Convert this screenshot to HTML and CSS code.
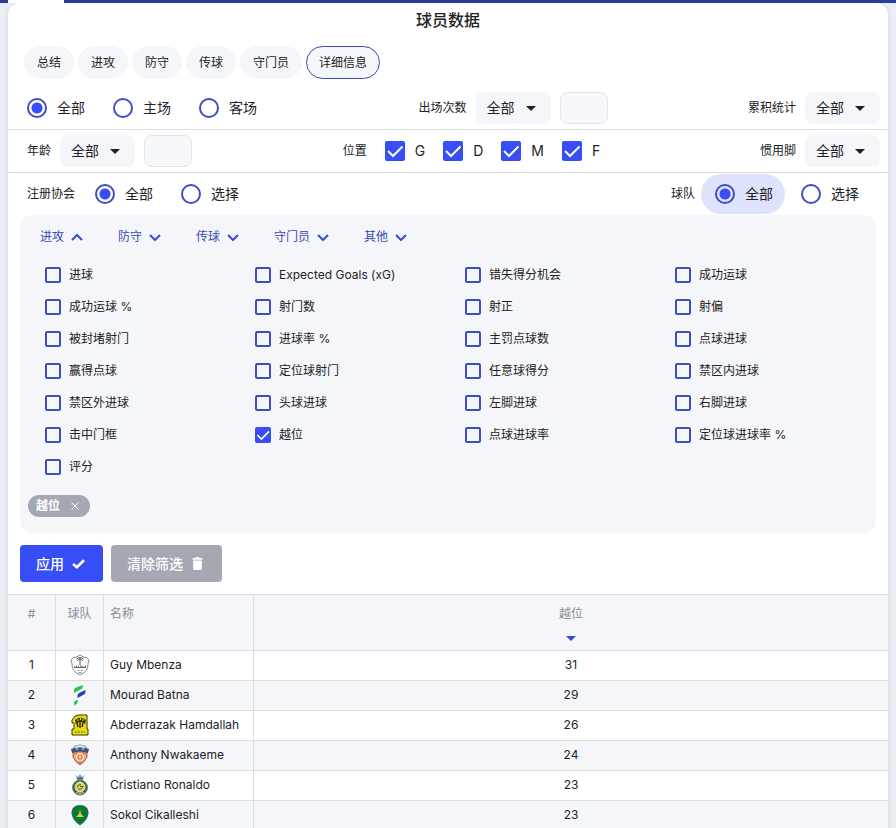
FILE: index.html
```html
<!DOCTYPE html>
<html lang="zh-CN">
  <head>
    <meta charset="UTF-8" />
    <meta name="viewport" content="width=device-width, initial-scale=1.0" />
    <title>球员数据</title>
    <link rel="stylesheet" href="styles.css">
  </head>
  <body>
    <div class="top-bar"><span class="top-bar-tab"></span></div>

    <main class="card">
      <h1>球员数据</h1>

      <!-- Category tabs -->
      <nav class="tabs">
        <button type="button">总结</button>
        <button type="button">进攻</button>
        <button type="button">防守</button>
        <button type="button">传球</button>
        <button type="button">守门员</button>
        <button type="button" class="active">详细信息</button>
      </nav>

      <form>
        <!-- Venue, appearances, accumulation -->
        <div class="filter-row">
          <div class="radio-group">
            <label class="radio"><input type="radio" name="venue" checked />全部</label>
            <label class="radio"><input type="radio" name="venue" />主场</label>
            <label class="radio"><input type="radio" name="venue" />客场</label>
          </div>
          <div class="filter-group">
            <label for="appearances">出场次数</label>
            <select id="appearances"><option>全部</option></select>
            <input type="text" class="number-box" aria-label="出场次数" />
          </div>
          <div class="filter-group">
            <label for="accumulation">累积统计</label>
            <select id="accumulation"><option>全部</option></select>
          </div>
        </div>

        <!-- Age, position, foot -->
        <div class="filter-row">
          <div class="filter-group first">
            <label for="age">年龄</label>
            <select id="age"><option>全部</option></select>
            <input type="text" class="number-box" aria-label="年龄" />
          </div>
          <div class="filter-group">
            <span>位置</span>
            <div class="position-group">
              <label class="position"><input type="checkbox" checked />G</label>
              <label class="position"><input type="checkbox" checked />D</label>
              <label class="position"><input type="checkbox" checked />M</label>
              <label class="position"><input type="checkbox" checked />F</label>
            </div>
          </div>
          <div class="filter-group">
            <label for="foot">惯用脚</label>
            <select id="foot"><option>全部</option></select>
          </div>
        </div>

        <!-- Nationality, team -->
        <div class="filter-row last">
          <div class="filter-group first radios">
            <span>注册协会</span>
            <div class="radio-group">
              <label class="radio"><input type="radio" name="nation" checked />全部</label>
              <label class="radio"><input type="radio" name="nation" />选择</label>
            </div>
          </div>
          <div class="filter-group radios">
            <span>球队</span>
            <div class="radio-group">
              <label class="radio highlight"><input type="radio" name="team" checked />全部</label>
              <label class="radio"><input type="radio" name="team" />选择</label>
            </div>
          </div>
        </div>

        <!-- Statistic picker -->
        <section class="panel">
          <div class="panel-tabs">
            <button type="button">进攻<svg class="chevron up" viewBox="0 0 12 8"><path d="M1 1l5 5 5-5" /></svg></button>
            <button type="button">防守<svg class="chevron" viewBox="0 0 12 8"><path d="M1 2l5 5 5-5" /></svg></button>
            <button type="button">传球<svg class="chevron" viewBox="0 0 12 8"><path d="M1 2l5 5 5-5" /></svg></button>
            <button type="button">守门员<svg class="chevron" viewBox="0 0 12 8"><path d="M1 2l5 5 5-5" /></svg></button>
            <button type="button">其他<svg class="chevron" viewBox="0 0 12 8"><path d="M1 2l5 5 5-5" /></svg></button>
          </div>
          <div class="stat-grid">
            <label><input type="checkbox" />进球</label>
            <label><input type="checkbox" />Expected Goals (xG)</label>
            <label><input type="checkbox" />错失得分机会</label>
            <label><input type="checkbox" />成功运球</label>
            <label><input type="checkbox" />成功运球 %</label>
            <label><input type="checkbox" />射门数</label>
            <label><input type="checkbox" />射正</label>
            <label><input type="checkbox" />射偏</label>
            <label><input type="checkbox" />被封堵射门</label>
            <label><input type="checkbox" />进球率 %</label>
            <label><input type="checkbox" />主罚点球数</label>
            <label><input type="checkbox" />点球进球</label>
            <label><input type="checkbox" />赢得点球</label>
            <label><input type="checkbox" />定位球射门</label>
            <label><input type="checkbox" />任意球得分</label>
            <label><input type="checkbox" />禁区内进球</label>
            <label><input type="checkbox" />禁区外进球</label>
            <label><input type="checkbox" />头球进球</label>
            <label><input type="checkbox" />左脚进球</label>
            <label><input type="checkbox" />右脚进球</label>
            <label><input type="checkbox" />击中门框</label>
            <label><input type="checkbox" checked />越位</label>
            <label><input type="checkbox" />点球进球率</label>
            <label><input type="checkbox" />定位球进球率 %</label>
            <label><input type="checkbox" />评分</label>
          </div>
          <button type="button" class="tag">越位<svg viewBox="0 0 8 8"><path d="M0.5 0.5l7 7M7.5 0.5l-7 7" /></svg></button>
        </section>

        <div class="actions">
          <button type="submit" class="apply">应用<svg viewBox="0 0 12 12"><path d="M1 6.5l3.5 3L11 3" fill="none" stroke="#fff" stroke-width="2.4" /></svg></button>
          <button type="reset" class="clear">清除筛选<svg viewBox="0 0 12 12"><path d="M1.5 1H4l.7-1h2.6L8 1h2.5v1.6h-9zM2 3.2h8v7.3A1.5 1.5 0 0 1 8.5 12h-5A1.5 1.5 0 0 1 2 10.5z" fill="#fff" /></svg></button>
        </div>
      </form>

      <!-- Results -->
      <table>
        <thead>
          <tr>
            <th class="rank">#</th>
            <th class="team">球队</th>
            <th class="name">名称</th>
            <th>越位<svg class="sort" viewBox="0 0 10 5"><path d="M0 0h10L5 5z" /></svg></th>
          </tr>
        </thead>
        <tbody>
          <tr>
            <td>1</td>
            <td>
              <svg class="crest" viewBox="0 0 20 22">
                <path d="M10 1l3 2 4 .5 2 3-1 3q.5 8-8 11.500Q1.500 17.500 2 9.500l-1-3 2-3L7 3z" fill="#fff" stroke="#777" stroke-width="0.9" />
                <path d="M10 4v7M6.500 5.500Q8 2.500 10 4q2-1.500 3.500 1.500M7.500 7L10 4l2.500 3" fill="none" stroke="#555" />
                <path d="M4.500 13.500v-1.500M6.500 13.500v-2M8.500 13.500v-1.500M11 13.500V11M13 13.500v-1.500M15.500 13.500v-2M4 13.500h12" fill="none" stroke="#555" stroke-width="0.9" />
                <path d="M7.500 16.500h2M11 16.500h2M8.500 18.500h3" stroke="#888" />
              </svg>
            </td>
            <td class="name">Guy Mbenza</td>
            <td>31</td>
          </tr>
          <tr>
            <td>2</td>
            <td>
              <svg class="crest" viewBox="0 0 20 22">
                <path d="M4 5.500Q4.500 4 6 3.500L13 1q.5 2.500-1.500 4L4 9z" fill="#2fc845" />
                <path d="M7.500 11q.5-1.500 2-2.200L15.500 6q.5 3-1.500 4.500l-6.500 3.500z" fill="#2142b5" />
                <path d="M4 18.500q.5-2 4-2.500 0 4-4 5.500z" fill="#2fc845" />
              </svg>
            </td>
            <td class="name">Mourad Batna</td>
            <td>29</td>
          </tr>
          <tr>
            <td>3</td>
            <td>
              <svg class="crest" viewBox="0 0 20 22">
                <path d="M2 6l3-4 4-1h8v14h1v6H2v-6h2V9H2z" fill="#e9dc13" stroke="#3a3800" />
                <path d="M5 6q5-5 11 0l-1 4q-5-4-9 0z" fill="#39370a" />
                <path d="M7 9l1 4M10 8v6M13 9l-1 4" stroke="#39370a" stroke-width="1.5" />
                <path d="M8 5v2M10.500 4v2M13 5v2" stroke="#e9dc13" />
                <path d="M5 18h10" stroke="#6b6710" stroke-dasharray="2 1" />
              </svg>
            </td>
            <td class="name">Abderrazak Hamdallah</td>
            <td>26</td>
          </tr>
          <tr>
            <td>4</td>
            <td>
              <svg class="crest" viewBox="0 0 20 22">
                <path d="M5 2q5-2 10 0l2 3v8q-2 5-7 8-5-3-7-8V5z" fill="#e8803c" stroke="#8a7480" />
                <path d="M5 2q5-2 10 0l1 3H4z" fill="#d7dce5" />
                <path d="M1 5q9-3 18 0l-1 4q-8-3-16 0z" fill="#35547c" />
                <path d="M6 6l1-2 1 2M12 6l1-2 1 2" fill="none" stroke="#a8b9cc" />
                <circle cx="10" cy="13" r="3.5" fill="#e8803c" stroke="#fbe8d8" stroke-width="1.3" />
                <path d="M9 12h2v2H9z" fill="#fbe8d8" />
                <path d="M5 10v4l3 4M15 10v4l-3 4" fill="none" stroke="#f7d3b6" stroke-width="0.8" />
              </svg>
            </td>
            <td class="name">Anthony Nwakaeme</td>
            <td>24</td>
          </tr>
          <tr>
            <td>5</td>
            <td>
              <svg class="crest" viewBox="0 0 20 22">
                <path d="M6 1l2 2 2-3 2 3 2-2-1 5H7z" fill="#8297b3" />
                <path d="M7 4.500h6" stroke="#384f70" />
                <ellipse cx="10" cy="13.500" rx="7.5" ry="7.500" fill="#375766" stroke="#71866e" />
                <circle cx="10" cy="13" r="5" fill="#e2d451" stroke="#dfe5b8" />
                <path d="M7 13.500q0-3 4-3M8 15q4 1 5-2.500M10 12.500h3" fill="none" stroke="#47652f" />
                <path d="M6 18.500q4 2 8 0" fill="none" stroke="#cbd086" />
              </svg>
            </td>
            <td class="name">Cristiano Ronaldo</td>
            <td>23</td>
          </tr>
          <tr>
            <td>6</td>
            <td>
              <svg class="crest" viewBox="0 0 20 22">
                <path d="M10 1c5 0 8.500 3 8.500 7.500S15 18 10 21.500C5 18 1.500 13 1.500 8.500S5 1 10 1z" fill="#0b763c" />
                <path d="M10 5l1 5 3 3H6l3-3z" fill="#e2d13a" />
              </svg>
            </td>
            <td class="name">Sokol Cikalleshi</td>
            <td>23</td>
          </tr>
        </tbody>
      </table>
    </main>
  </body>
</html>
```
FILE: styles.css
```css
* {
  box-sizing: border-box;
}

body {
  margin: 0;
  background-color: #ebeff5;
  color: #222226;
  font-family: Inter, "Noto Sans CJK SC", sans-serif;
  font-size: 12px;
  line-height: 16px;
}

button,
input,
select {
  font: inherit;
  color: inherit;
  margin: 0;
}

button {
  border: none;
  padding: 0;
  cursor: pointer;
}

.top-bar {
  display: flex;
  height: 3px;
  padding-left: 8px;
  background-color: #2c3c9c;
}

.top-bar-tab {
  width: 56px;
  background-color: #ffffff;
}

.card {
  margin: 0 8px;
  padding-top: 7px;
  background-color: #ffffff;
  border-radius: 12px 12px 0 0;
  box-shadow: 0 1px 6px rgba(34, 34, 80, 0.12);
}

h1 {
  margin: 0;
  font-size: 16px;
  font-weight: 500;
  line-height: 20px;
  text-align: center;
}

/* Category tabs */
.tabs {
  display: flex;
  gap: 4px;
  padding: 16px 16px 8px;
}

.tabs button {
  height: 33px;
  padding: 0 12px;
  border: 1px solid #f4f6fa;
  border-radius: 17px;
  background-color: #f4f6fa;
}

.tabs .active {
  border-color: #3a49b5;
}

/* Filter rows */
.filter-row {
  display: flex;
  justify-content: space-between;
  align-items: center;
  height: 43px;
  padding: 0 8px 0 5px;
  border-bottom: 1px solid #d9dddd;
}

.filter-row.last {
  height: 42px;
  border-bottom: none;
}

.filter-group {
  display: flex;
  align-items: center;
  gap: 9px;
}

.filter-group.first {
  padding-left: 14px;
}

.filter-group.radios {
  gap: 6px;
}

.radio-group {
  display: flex;
  gap: 2px;
  margin-right: 9px;
}

.radio {
  display: flex;
  align-items: center;
  gap: 10px;
  height: 40px;
  padding: 0 12px 0 14px;
  border-radius: 20px;
  font-size: 14px;
}

.radio.highlight {
  background-color: #dfe2fb;
}

.radio input {
  appearance: none;
  width: 20px;
  height: 20px;
  border: 2px solid #3f4dc4;
  border-radius: 50%;
}

.radio input:checked {
  background: radial-gradient(circle, #374df5 5px, transparent 6px);
}

select {
  appearance: none;
  width: 75px;
  height: 32px;
  padding: 0 11px;
  border: none;
  border-radius: 8px;
  background: #f4f6fa url("data:image/svg+xml,%3Csvg xmlns='http://www.w3.org/2000/svg' viewBox='0 0 10 5'%3E%3Cpath d='M0 0h10L5 5z' fill='%23222226'/%3E%3C/svg%3E") no-repeat right 15px center / 10px 5px;
  font-size: 14px;
}

.number-box {
  width: 48px;
  height: 32px;
  padding: 0 8px;
  border: 1px solid #e2e5e8;
  border-radius: 8px;
  background-color: #f7f8fb;
}

/* Checkboxes */
input[type="checkbox"] {
  appearance: none;
  flex: none;
  width: 16px;
  height: 16px;
  border: 2px solid #3f4dc4;
  border-radius: 2px;
}

input[type="checkbox"]:checked {
  border: none;
  background: #374df5 url("data:image/svg+xml,%3Csvg xmlns='http://www.w3.org/2000/svg' viewBox='0 0 20 20'%3E%3Cpath d='M3 10l5 5L17.5 5.5' fill='none' stroke='white' stroke-width='2'/%3E%3C/svg%3E");
}

.position-group {
  display: flex;
}

.position {
  display: flex;
  align-items: center;
  gap: 10px;
  padding: 0 9px;
  font-size: 14px;
}

.position input[type="checkbox"] {
  width: 20px;
  height: 20px;
}

/* Statistic picker */
.panel {
  margin: 0 12px;
  padding: 0 0 16px 16px;
  border-radius: 12px;
  background-color: #f4f6fa;
}

.panel-tabs {
  display: flex;
  gap: 35px;
  height: 44px;
  padding-left: 4px;
}

.panel-tabs button {
  display: flex;
  align-items: center;
  gap: 7px;
  background: none;
  color: #3a49b5;
}

.chevron {
  width: 12px;
  height: 8px;
  fill: none;
  stroke: #3a49d0;
  stroke-width: 2;
}

.chevron.up {
  transform: rotate(180deg);
}

.stat-grid {
  display: grid;
  grid-template-columns: repeat(4, 1fr);
  grid-auto-rows: 32px;
}

.stat-grid label {
  display: flex;
  align-items: center;
  gap: 8px;
  padding-left: 9px;
}

.tag {
  display: flex;
  align-items: center;
  gap: 11px;
  height: 22px;
  margin: 12px 0 0 -8px;
  padding: 0 11px 0 8px;
  border-radius: 11px;
  background-color: #a5a8b2;
  color: #ffffff;
  font-weight: 700;
}

.tag svg {
  width: 8px;
  height: 8px;
  stroke: #ffffff;
}

.actions {
  display: flex;
  gap: 8px;
  padding: 12px;
}

.actions button {
  display: flex;
  align-items: center;
  gap: 8px;
  height: 37px;
  padding: 0 18px 0 16px;
  border-radius: 4px;
  color: #ffffff;
  font-size: 14px;
  font-weight: 500;
}

.actions svg {
  width: 13px;
  height: 13px;
}

.actions .apply {
  background-color: #374df5;
}

.actions .clear {
  background-color: #a5a8b2;
}

/* Results table */
table {
  width: 100%;
  table-layout: fixed;
  border-spacing: 0;
}

th,
td {
  height: 30px;
  padding: 0 0 2px;
  border-right: 1px solid #d9dddd;
  border-bottom: 1px solid #d9dddd;
  text-align: center;
}

th:last-child,
td:last-child {
  border-right: none;
}

th {
  height: 57px;
  padding-top: 11px;
  border-top: 1px solid #d9dddd;
  background-color: #f4f6fa;
  color: #8b8d96;
  font-weight: 400;
  vertical-align: top;
}

.rank,
.team {
  width: 48px;
}

th.name {
  width: 150px;
}

.name {
  padding-left: 6px;
  text-align: left;
}

tbody tr:nth-child(even) {
  background-color: #f4f6fa;
}

.sort {
  display: block;
  width: 10px;
  height: 5px;
  margin: 14px auto 0;
  fill: #374dc8;
}

.crest {
  display: block;
  width: 20px;
  height: 22px;
  margin: 0 auto;
}
```
